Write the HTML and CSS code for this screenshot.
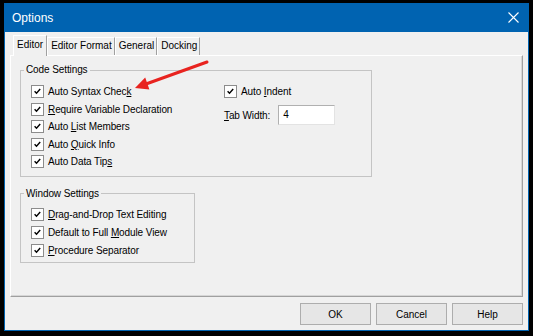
FILE: index.html
```html
<!DOCTYPE html>
<html lang="en">
<head>
  <meta charset="UTF-8">
  <title>Options</title>
  <link rel="stylesheet" href="styles.css">
</head>
<body>
  <div class="window">
    <div class="titlebar">
      <span class="title">Options</span>
      <svg class="close" width="11" height="11" viewBox="0 0 11 11">
        <path d="M0.5 0.5 L10.5 10.5 M10.5 0.5 L0.5 10.5" stroke="#fff" stroke-width="1.1" fill="none"/>
      </svg>
    </div>

    <div class="content">
      <div class="tabs">
        <div class="tab active">Editor</div>
        <div class="tab">Editor Format</div>
        <div class="tab">General</div>
        <div class="tab">Docking</div>
      </div>

      <div class="panel">
        <fieldset class="group code-group">
          <legend>Code Settings</legend>
          <div class="cols">
            <div class="col left-col">
              <div class="row"><span class="check"></span><span>Auto Syntax Chec<u>k</u></span></div>
              <div class="row"><span class="check"></span><span><u>R</u>equire Variable Declaration</span></div>
              <div class="row"><span class="check"></span><span>Auto <u>L</u>ist Members</span></div>
              <div class="row"><span class="check"></span><span>Auto <u>Q</u>uick Info</span></div>
              <div class="row"><span class="check"></span><span>Auto Data Tip<u>s</u></span></div>
            </div>
            <div class="col">
              <div class="row"><span class="check"></span><span>Auto <u>I</u>ndent</span></div>
              <div class="row tab-row"><span><u>T</u>ab Width:</span><span class="field">4</span></div>
            </div>
          </div>
        </fieldset>

        <fieldset class="group window-group">
          <legend>Window Settings</legend>
          <div class="row"><span class="check"></span><span><u>D</u>rag-and-Drop Text Editing</span></div>
          <div class="row"><span class="check"></span><span>Default to Full <u>M</u>odule View</span></div>
          <div class="row"><span class="check"></span><span><u>P</u>rocedure Separator</span></div>
        </fieldset>
      </div>

      <div class="buttons">
        <button>OK</button>
        <button>Cancel</button>
        <button>Help</button>
      </div>
    </div>
  </div>

  <!-- annotation arrow drawn over the dialog -->
  <svg class="arrow" width="533" height="336" viewBox="0 0 533 336">
    <path d="M207 62 L146 84" stroke="#e8231f" stroke-width="3" stroke-linecap="round" fill="none"/>
    <polygon points="135,88 145.2,77.6 149.4,89.4" fill="#e8231f"/>
  </svg>
</body>
</html>
```

FILE: styles.css
```css
body {
  margin: 0;
  padding: 3px 4px 5px 4px;
  background: #000;
  font-family: "Liberation Sans", Arial, sans-serif;
  font-size: 10px;
  letter-spacing: -0.1px;
  color: #000;
  position: relative;
}
.window {
  width: 525px;
  height: 328px;
  box-sizing: border-box;
  border: 1px solid #0063b1;
  display: flex;
  flex-direction: column;
}
.titlebar {
  height: 28px;
  background: #0063b1;
  color: #fff;
  display: flex;
  align-items: center;
  justify-content: space-between;
  padding: 0 9px 0 7px;
}
.title {
  font-size: 12px;
  letter-spacing: 0;
  margin-top: -1px;
}
.close {
  margin-top: -2px;
}
.content {
  flex: 1;
  background: #f0f0f0;
  padding: 3px 5px 0 5px;
}
.tabs {
  display: flex;
  align-items: flex-end;
  height: 20px;
  padding-left: 5px;
}
.tab {
  height: 17px;
  line-height: 16px;
  padding: 0 2px 0 3px;
  letter-spacing: 0;
  border-top: 1px solid #fff;
  border-left: 1px solid #fff;
  border-right: 1px solid #a0a0a0;
}
.tab.active {
  height: 20px;
  line-height: 17px;
  padding: 0 3px;
  margin-bottom: -1px;
  margin-left: -2px;
  background: #f0f0f0;
  position: relative;
  z-index: 1;
}
.panel {
  height: 242px;
  box-sizing: border-box;
  border-top: 1px solid #fff;
  border-left: 1px solid #fff;
  border-right: 1px solid #a0a0a0;
  border-bottom: 1px solid #a0a0a0;
  box-shadow: inset -1px -1px 0 #d6d6d6;
}
.group {
  border: 1px solid #c4c4c4;
  margin: 0 0 0 9px;
  box-sizing: border-box;
  min-inline-size: 0;
}
.group legend {
  padding: 0 2px;
  margin-left: -7px;
  line-height: 12px;
}
.code-group {
  width: 352px;
  margin-top: 8px;
  padding: 7px 9px 5px 10px;
}
.window-group {
  width: 175px;
  margin-top: 11px;
  padding: 6px 9px 2px 10px;
}
.cols {
  display: grid;
  grid-template-columns: 193px 1fr;
}
.row {
  height: 17.5px;
  display: flex;
  align-items: center;
  white-space: nowrap;
}
.window-group .row {
  height: 18px;
}
.check {
  width: 11px;
  height: 11px;
  border: 1px solid #8c8c8c;
  background: #fff url("data:image/svg+xml,%3Csvg xmlns='http://www.w3.org/2000/svg' width='11' height='11'%3E%3Cpath d='M2.6 5.3 L4.5 7.3 L8.2 3' stroke='%23000' stroke-width='1.4' fill='none'/%3E%3C/svg%3E") no-repeat;
  margin-right: 4px;
  flex: none;
}
u {
  text-decoration-thickness: 1px;
  text-underline-offset: 1px;
}
.tab-row {
  margin-top: 4.5px;
  height: 20px;
}
.field {
  width: 57px;
  height: 20px;
  box-sizing: border-box;
  margin-left: 8px;
  padding: 2px 4px;
  background: #fff;
  border: 1px solid #b0b0b0;
  border-bottom-color: #e3e3e3;
  border-right-color: #e3e3e3;
  line-height: 14px;
}
.buttons {
  display: flex;
  justify-content: flex-end;
  gap: 5px;
  margin-top: 6px;
}
button {
  width: 71px;
  height: 22px;
  font-family: inherit;
  font-size: 10px;
  color: #000;
  background: #e6e6e6;
  border: 1px solid #adadad;
  padding: 0;
}
.arrow {
  position: absolute;
  left: 0;
  top: 0;
  pointer-events: none;
}
```
